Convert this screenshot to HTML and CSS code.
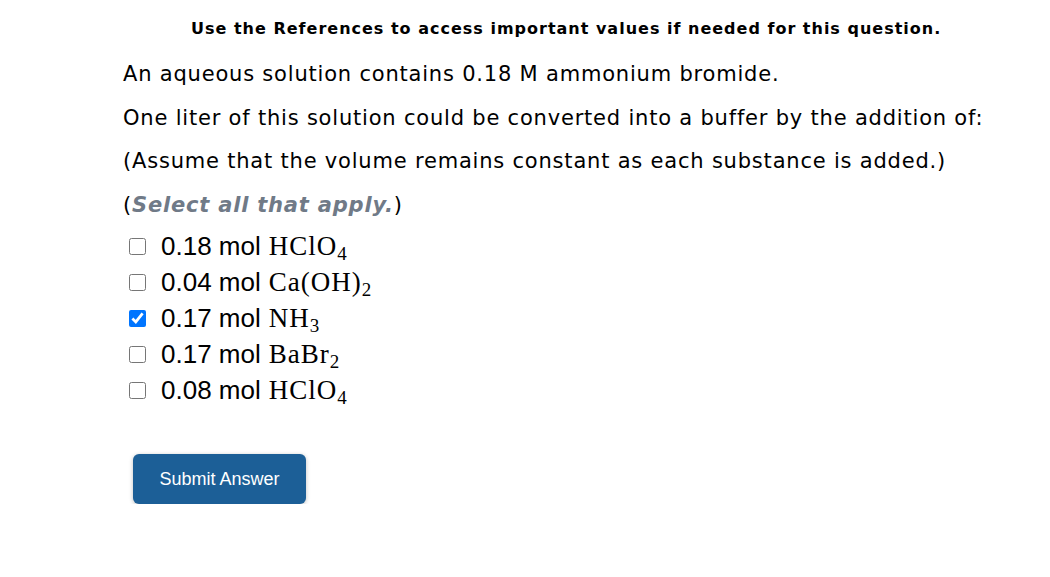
FILE: index.html
```html
<!DOCTYPE html>
<html>
<head>
<meta charset="utf-8">
<link rel="stylesheet" href="styles.css">
</head>
<body>
<div class="page">
  <div class="refs">Use the References to access important values if needed for this question.</div>
  <div class="question">
    <p class="line">An aqueous solution contains 0.18 M ammonium bromide.</p>
    <p class="line">One liter of this solution could be converted into a buffer by the addition of:</p>
    <p class="line">(Assume that the volume remains constant as each substance is added.)</p>
    <p class="line">(<em class="hint">Select all that apply.</em>)</p>
  </div>
  <ul class="options">
    <li class="option"><input type="checkbox"><span class="amt">0.18 mol</span><span class="chem">HClO<sub>4</sub></span></li>
    <li class="option"><input type="checkbox"><span class="amt">0.04 mol</span><span class="chem">Ca(OH)<sub>2</sub></span></li>
    <li class="option"><input type="checkbox" checked><span class="amt">0.17 mol</span><span class="chem">NH<sub>3</sub></span></li>
    <li class="option"><input type="checkbox"><span class="amt">0.17 mol</span><span class="chem">BaBr<sub>2</sub></span></li>
    <li class="option"><input type="checkbox"><span class="amt">0.08 mol</span><span class="chem">HClO<sub>4</sub></span></li>
  </ul>
  <div class="actions">
    <button class="submit">Submit Answer</button>
  </div>
</div>
</body>
</html>
```
FILE: styles.css
```css
html, body {
  margin: 0;
  padding: 0;
  background: #ffffff;
}
.page {
  padding: 17px 0 0 123px;
  font-family: "DejaVu Sans", Verdana, sans-serif;
  color: #000;
}
.refs {
  font-weight: bold;
  font-size: 16px;
  letter-spacing: 1px;
  line-height: 24px;
  padding-left: 68px;
  margin-bottom: 12px;
}
.question .line {
  margin: 0;
  font-size: 21px;
  letter-spacing: 0.8px;
  line-height: 43.5px;
}
.hint {
  font-style: italic;
  font-weight: bold;
  color: #707a87;
}
.options {
  list-style: none;
  margin: 1px 0 0 0;
  padding: 0;
}
.option {
  display: flex;
  align-items: center;
  height: 36px;
  font-family: "Liberation Sans", Arial, sans-serif;
  font-size: 26px;
}
.option input {
  width: 17px;
  height: 17px;
  margin: 0 15px 0 6px;
}
.amt {
  margin-right: 8px;
}
.chem {
  font-family: "Liberation Serif", "DejaVu Serif", serif;
  font-size: 27px;
  letter-spacing: 1px;
}
.chem sub {
  font-size: 19px;
  vertical-align: -5px;
  line-height: 0;
}
.actions {
  padding: 46px 0 0 10px;
}
.submit {
  width: 173px;
  height: 50px;
  border: none;
  border-radius: 6px;
  background: #1c5f97;
  color: #fff;
  font-family: "Liberation Sans", Arial, sans-serif;
  font-size: 18px;
  box-shadow: 0 1px 4px rgba(0,0,0,0.25);
}
```
